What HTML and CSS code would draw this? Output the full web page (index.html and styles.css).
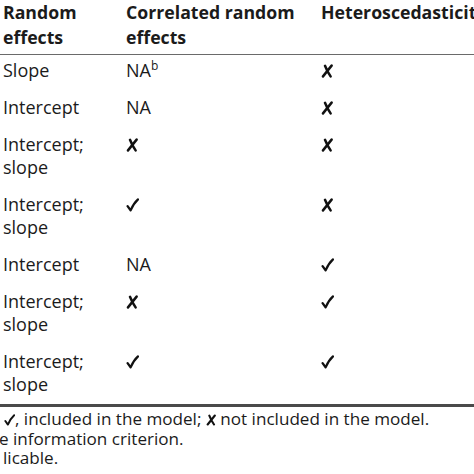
FILE: index.html
```html
<!DOCTYPE html>
<html>
<head>
<meta charset="utf-8">
<link rel="stylesheet" href="styles.css">
</head>
<body>
<div class="page">
  <table class="tbl">
    <thead>
      <tr>
        <th class="c1">Random<br>effects</th>
        <th class="c2">Correlated random<br>effects</th>
        <th class="c3">Heteroscedasticity</th>
      </tr>
    </thead>
    <tbody>
      <tr><td>Slope</td><td>NA<sup>b</sup></td><td><svg class="no" viewBox="0 0 12 14"><path d="M4 1.8 Q6.2 7.5 9.6 12.4 M10.6 1.6 L2 12.4"/></svg></td></tr>
      <tr><td>Intercept</td><td>NA</td><td><svg class="no" viewBox="0 0 12 14"><path d="M4 1.8 Q6.2 7.5 9.6 12.4 M10.6 1.6 L2 12.4"/></svg></td></tr>
      <tr><td>Intercept;<br>slope</td><td><svg class="no" viewBox="0 0 12 14"><path d="M4 1.8 Q6.2 7.5 9.6 12.4 M10.6 1.6 L2 12.4"/></svg></td><td><svg class="no" viewBox="0 0 12 14"><path d="M4 1.8 Q6.2 7.5 9.6 12.4 M10.6 1.6 L2 12.4"/></svg></td></tr>
      <tr><td>Intercept;<br>slope</td><td><svg class="yes" viewBox="0 0 13 14"><path d="M1.6 8.2 L4.6 12.4 Q7.6 5.4 12 1.4"/></svg></td><td><svg class="no" viewBox="0 0 12 14"><path d="M4 1.8 Q6.2 7.5 9.6 12.4 M10.6 1.6 L2 12.4"/></svg></td></tr>
      <tr><td>Intercept</td><td>NA</td><td><svg class="yes" viewBox="0 0 13 14"><path d="M1.6 8.2 L4.6 12.4 Q7.6 5.4 12 1.4"/></svg></td></tr>
      <tr><td>Intercept;<br>slope</td><td><svg class="no" viewBox="0 0 12 14"><path d="M4 1.8 Q6.2 7.5 9.6 12.4 M10.6 1.6 L2 12.4"/></svg></td><td><svg class="yes" viewBox="0 0 13 14"><path d="M1.6 8.2 L4.6 12.4 Q7.6 5.4 12 1.4"/></svg></td></tr>
      <tr><td>Intercept;<br>slope</td><td><svg class="yes" viewBox="0 0 13 14"><path d="M1.6 8.2 L4.6 12.4 Q7.6 5.4 12 1.4"/></svg></td><td><svg class="yes" viewBox="0 0 13 14"><path d="M1.6 8.2 L4.6 12.4 Q7.6 5.4 12 1.4"/></svg></td></tr>
    </tbody>
  </table>
  <div class="notes">
    <p class="n1"><svg class="yes sm" viewBox="0 0 13 14"><path d="M1.6 8.2 L4.6 12.4 Q7.6 5.4 12 1.4"/></svg>, included in the model; <svg class="no sm" viewBox="0 0 12 14"><path d="M4 1.8 Q6.2 7.5 9.6 12.4 M10.6 1.6 L2 12.4"/></svg> not included in the model.</p>
    <p class="n2">e information criterion.</p>
    <p class="n3">licable.</p>
  </div>
</div>
</body>
</html>
```
FILE: styles.css
```css
html, body {
  margin: 0;
  padding: 0;
  background: #ffffff;
}
body {
  width: 474px;
  height: 474px;
  overflow: hidden;
  font-family: "Open Sans", "Noto Sans", sans-serif;
  color: #1b1b1b;
}
.page {
  width: 474px;
  overflow: hidden;
}
.tbl {
  border-collapse: collapse;
  width: 474px;
  table-layout: fixed;
}
.tbl th {
  text-align: left;
  vertical-align: top;
  font-weight: 700;
  font-size: 17.7px;
  line-height: 24.5px;
  padding: 0 0 5px 0;
  white-space: nowrap;
  overflow: hidden;
  border-bottom: 1px solid #6a6a6a;
}
.tbl .c1 { width: 123px; padding-left: 3px; }
.tbl .c2 { width: 195px; }
.tbl td {
  text-align: left;
  vertical-align: top;
  font-size: 18px;
  line-height: 23px;
  padding: 3.5px 0 10.5px 0;
}
.tbl td:first-child { padding-left: 3px; }
.tbl tbody tr:last-child td {
  padding-bottom: 8.5px;
  border-bottom: 3px solid #4a4a4a;
}
sup {
  font-size: 12px;
  line-height: 0;
  vertical-align: 7px;
}
svg.no {
  width: 12px;
  height: 14px;
  vertical-align: -1px;
  fill: none;
  stroke: #111;
  stroke-width: 2.5;
  stroke-linecap: round;
}
svg.yes {
  width: 13px;
  height: 14px;
  vertical-align: -1px;
  fill: none;
  stroke: #111;
  stroke-width: 2.3;
  stroke-linecap: round;
  stroke-linejoin: round;
}
svg.no.sm { width: 10px; height: 12px; vertical-align: -1px; }
svg.yes.sm { width: 11px; height: 12px; vertical-align: -1px; }
.notes {
  font-size: 17.1px;
  line-height: 19.5px;
  padding-top: 2px;
  white-space: nowrap;
}
.notes p { margin: 0; }
.n1 { padding-left: 4px; }
.n2 { margin-left: -1px !important; }
.n3 { padding-left: 3px; }
```
